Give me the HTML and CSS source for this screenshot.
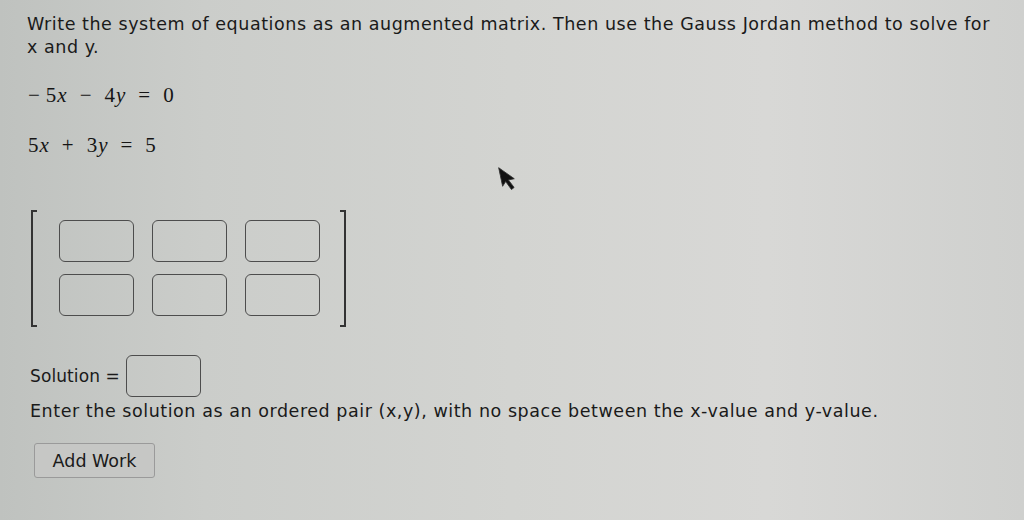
FILE: index.html
```html
<!DOCTYPE html>
<html>
<head>
<meta charset="utf-8">
<link rel="stylesheet" href="styles.css">
</head>
<body>
<div class="page">
  <p class="prompt">Write the system of equations as an augmented matrix. Then use the Gauss Jordan method to solve for x and y.</p>
  <div class="eq eq1"><span>−</span><span class="n">5</span><i>x</i><span class="op">−</span><span class="n">4</span><i>y</i><span class="op">=</span><span class="n">0</span></div>
  <div class="eq eq2"><span class="n">5</span><i>x</i><span class="op">+</span><span class="n">3</span><i>y</i><span class="op">=</span><span class="n">5</span></div>
  <div class="matrix">
    <div class="bracket left"></div>
    <div class="cells">
      <div class="cell"></div><div class="cell"></div><div class="cell"></div>
      <div class="cell"></div><div class="cell"></div><div class="cell"></div>
    </div>
    <div class="bracket right"></div>
  </div>
  <div class="solution"><span>Solution =</span><div class="cell small"></div></div>
  <p class="hint">Enter the solution as an ordered pair (x,y), with no space between the x-value and y-value.</p>
  <button class="addwork">Add Work</button>
</div>
<svg class="cursor" width="16" height="26" viewBox="0 0 16 26"><path d="M1 1 L1 20 L5 16 L9 25 L12 23.5 L8 15 L14 15 Z" fill="#111" stroke="#333" stroke-width="0.8"/></svg>
</body>
</html>
```
FILE: styles.css
```css
html, body { margin: 0; height: 100%; }
body {
  width: 1024px; height: 520px; overflow: hidden; position: relative;
  background: linear-gradient(90deg, #bfc2bf 0%, #cbcdca 20%, #d3d4d1 50%, #d8d8d6 75%, #cfd0ce 100%);
  font-family: "DejaVu Sans", sans-serif;
  color: #1a1a1a;
}
.page { padding: 13px 20px 0 27px; }
.prompt { margin: 0; font-size: 17.5px; line-height: 23px; letter-spacing: 0.55px; width: 968px; }
.eq { font-family: "Liberation Serif", serif; font-size: 21px; display: flex; align-items: baseline; height: 26px; margin-left: 1px; color: #151515; }
.eq i { font-style: italic; margin-left: 1px; }
.eq .op { margin: 0 13px; }
.eq1 { margin-top: 24px; }
.eq1 > span:first-child { margin-right: 6px; }
.eq2 { margin-top: 24px; }
.matrix { display: flex; margin-top: 51px; margin-left: 4px; height: 117px; align-items: stretch; }
.bracket { width: 4px; border: 2px solid #333; }
.bracket.left { border-right: none; }
.bracket.right { border-left: none; margin-left: 20px; }
.cells { display: grid; grid-template-columns: repeat(3, 75px); grid-auto-rows: 42px; column-gap: 18px; row-gap: 12px; padding: 10px 0 0 22px; }
.cell { box-sizing: border-box; border: 1.5px solid #4d4d4d; border-radius: 6px; width: 75px; height: 42px; }
.solution { display: flex; align-items: center; gap: 6px; margin-top: 28px; margin-left: 3px; font-size: 17px; letter-spacing: 0.1px; }
.hint { margin: 4px 0 0 3px; font-size: 17.5px; letter-spacing: 0.55px; }
.addwork {
  margin: 22px 0 0 7px; width: 121px; height: 35px;
  font-family: "DejaVu Sans", sans-serif; font-size: 17.5px; color: #1a1a1a;
  background: #c6c7c5; border: 1px solid #9a9a9a; border-radius: 3px;
}
.cursor { position: absolute; left: 500px; top: 165px; transform: rotate(-12deg); }
```
